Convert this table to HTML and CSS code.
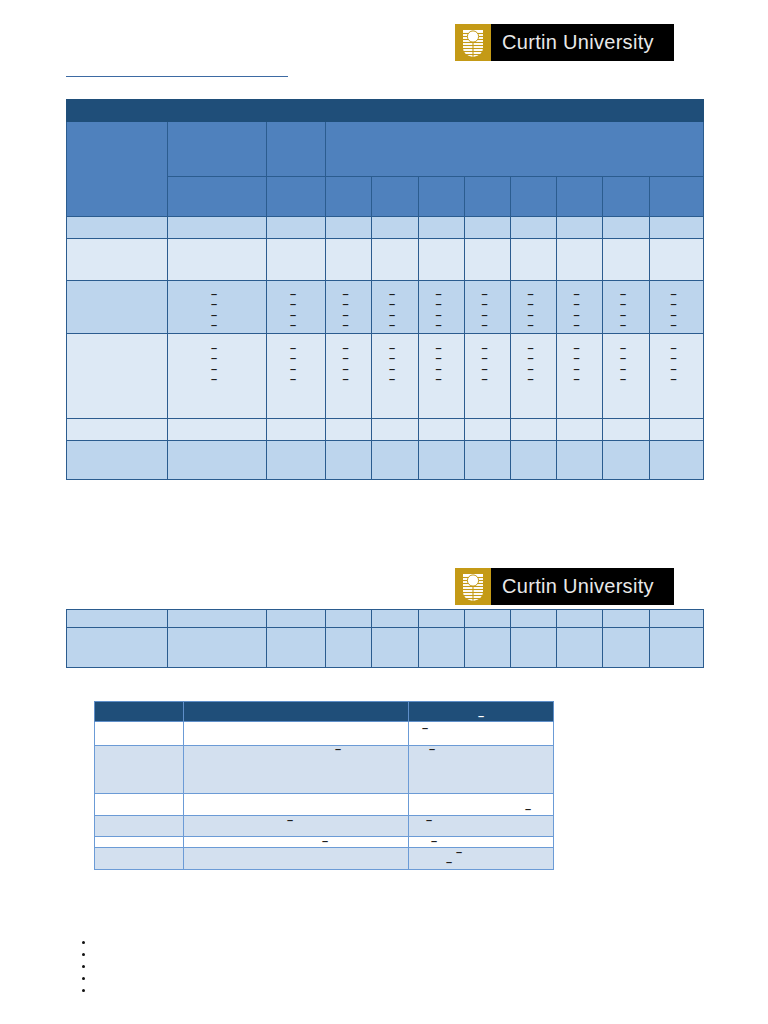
FILE: index.html
```html
<!DOCTYPE html>
<html lang="en">
<head>
<meta charset="utf-8">
<title>Curtin University</title>
<link rel="stylesheet" href="styles.css">
</head>
<body>
<div class="page">
  <div class="logo-row">
    <div class="logo">
      <div class="crest">
        <svg viewBox="0 0 36 37" width="36" height="37">
          <path d="M8 6 H28 V24 Q28 31 18 33 Q8 31 8 24 Z" fill="#fff"/>
          <g stroke="#c49a16" stroke-width="1.1">
            <line x1="8" y1="9.5" x2="28" y2="9.5"/>
            <line x1="8" y1="12.5" x2="28" y2="12.5"/>
            <line x1="8" y1="15.5" x2="28" y2="15.5"/>
            <line x1="8" y1="18.5" x2="28" y2="18.5"/>
            <line x1="8" y1="21.5" x2="28" y2="21.5"/>
            <line x1="8" y1="24.5" x2="28" y2="24.5"/>
            <line x1="8" y1="27.5" x2="28" y2="27.5"/>
            <line x1="8" y1="30.5" x2="28" y2="30.5"/>
            <line x1="18" y1="17" x2="18" y2="33"/>
          </g>
          <circle cx="18" cy="12.5" r="5.6" fill="#fff" stroke="#c49a16" stroke-width="1"/>
        </svg>
      </div>
      <div class="wordmark">Curtin University</div>
    </div>
  </div>
  <div class="rule"></div>

  <table class="t1">
    <colgroup>
      <col class="c101"><col class="c99"><col class="c59"><col class="c46"><col class="c47"><col class="c46"><col class="c46"><col class="c46"><col class="c46"><col class="c47"><col class="c54">
    </colgroup>
    <tr class="h22"><td class="dark" colspan="11"></td></tr>
    <tr class="h55"><td class="hdr" rowspan="2"></td><td class="hdr"></td><td class="hdr"></td><td class="hdr" colspan="8"></td></tr>
    <tr class="h40"><td class="hdr"></td><td class="hdr"></td><td class="hdr"></td><td class="hdr"></td><td class="hdr"></td><td class="hdr"></td><td class="hdr"></td><td class="hdr"></td><td class="hdr"></td><td class="hdr"></td></tr>
    <tr class="h22 mid"><td></td><td></td><td></td><td></td><td></td><td></td><td></td><td></td><td></td><td></td><td></td></tr>
    <tr class="h42 light"><td></td><td></td><td></td><td></td><td></td><td></td><td></td><td></td><td></td><td></td><td></td></tr>
    <tr class="h53 mid">
      <td></td>
      <td class="dashes">–<br>–<br>–<br>–</td>
      <td class="dashes">–<br>–<br>–<br>–</td>
      <td class="dashes">–<br>–<br>–<br>–</td>
      <td class="dashes">–<br>–<br>–<br>–</td>
      <td class="dashes">–<br>–<br>–<br>–</td>
      <td class="dashes">–<br>–<br>–<br>–</td>
      <td class="dashes">–<br>–<br>–<br>–</td>
      <td class="dashes">–<br>–<br>–<br>–</td>
      <td class="dashes">–<br>–<br>–<br>–</td>
      <td class="dashes">–<br>–<br>–<br>–</td>
    </tr>
    <tr class="h85 light">
      <td></td>
      <td class="dashes b">–<br>–<br>–<br>–</td>
      <td class="dashes b">–<br>–<br>–<br>–</td>
      <td class="dashes b">–<br>–<br>–<br>–</td>
      <td class="dashes b">–<br>–<br>–<br>–</td>
      <td class="dashes b">–<br>–<br>–<br>–</td>
      <td class="dashes b">–<br>–<br>–<br>–</td>
      <td class="dashes b">–<br>–<br>–<br>–</td>
      <td class="dashes b">–<br>–<br>–<br>–</td>
      <td class="dashes b">–<br>–<br>–<br>–</td>
      <td class="dashes b">–<br>–<br>–<br>–</td>
    </tr>
    <tr class="h22 light"><td></td><td></td><td></td><td></td><td></td><td></td><td></td><td></td><td></td><td></td><td></td></tr>
    <tr class="h39 mid"><td></td><td></td><td></td><td></td><td></td><td></td><td></td><td></td><td></td><td></td><td></td></tr>
  </table>

  <div class="logo-row second">
    <div class="logo">
      <div class="crest">
        <svg viewBox="0 0 36 37" width="36" height="37">
          <path d="M8 6 H28 V24 Q28 31 18 33 Q8 31 8 24 Z" fill="#fff"/>
          <g stroke="#c49a16" stroke-width="1.1">
            <line x1="8" y1="9.5" x2="28" y2="9.5"/>
            <line x1="8" y1="12.5" x2="28" y2="12.5"/>
            <line x1="8" y1="15.5" x2="28" y2="15.5"/>
            <line x1="8" y1="18.5" x2="28" y2="18.5"/>
            <line x1="8" y1="21.5" x2="28" y2="21.5"/>
            <line x1="8" y1="24.5" x2="28" y2="24.5"/>
            <line x1="8" y1="27.5" x2="28" y2="27.5"/>
            <line x1="8" y1="30.5" x2="28" y2="30.5"/>
            <line x1="18" y1="17" x2="18" y2="33"/>
          </g>
          <circle cx="18" cy="12.5" r="5.6" fill="#fff" stroke="#c49a16" stroke-width="1"/>
        </svg>
      </div>
      <div class="wordmark">Curtin University</div>
    </div>
  </div>

  <table class="t1 t2">
    <colgroup>
      <col class="c101"><col class="c99"><col class="c59"><col class="c46"><col class="c47"><col class="c46"><col class="c46"><col class="c46"><col class="c46"><col class="c47"><col class="c54">
    </colgroup>
    <tr class="h18 mid"><td></td><td></td><td></td><td></td><td></td><td></td><td></td><td></td><td></td><td></td><td></td></tr>
    <tr class="h40 mid"><td></td><td></td><td></td><td></td><td></td><td></td><td></td><td></td><td></td><td></td><td></td></tr>
  </table>

  <table class="t3">
    <colgroup><col class="k1"><col class="k2"><col class="k3"></colgroup>
    <tr class="r20 dark3"><td></td><td></td><td><span class="dash white d-h3">–</span></td></tr>
    <tr class="r24"><td></td><td></td><td><span class="dash d-r1c3">–</span></td></tr>
    <tr class="r48 shade"><td></td><td><span class="dash d-r2c2">–</span></td><td><span class="dash d-r2c3">–</span></td></tr>
    <tr class="r22"><td></td><td></td><td><span class="dash d-r3c3">–</span></td></tr>
    <tr class="r21 shade"><td></td><td><span class="dash d-r4c2">–</span></td><td><span class="dash d-r4c3">–</span></td></tr>
    <tr class="r11"><td></td><td><span class="dash d-r5c2">–</span></td><td><span class="dash d-r5c3">–</span></td></tr>
    <tr class="r22 shade"><td></td><td></td><td><span class="dash d-r6a">–</span><span class="dash d-r6b">–</span></td></tr>
  </table>

  <ul class="bullets">
    <li>&nbsp;</li>
    <li>&nbsp;</li>
    <li>&nbsp;</li>
    <li>&nbsp;</li>
    <li>&nbsp;</li>
  </ul>
</div>
</body>
</html>
```

FILE: styles.css
```css
html, body {
  margin: 0;
  padding: 0;
  background: #ffffff;
}

body {
  font-family: "Liberation Sans", Arial, sans-serif;
  color: #1a1a1a;
}

.page {
  width: 768px;
  padding-top: 24px;
}

.logo-row {
  display: flex;
  justify-content: flex-end;
  padding-right: 94px;
}

.logo-row.second {
  margin-top: 88px;
}

.logo {
  display: flex;
  height: 37px;
}

.crest {
  width: 36px;
  height: 37px;
  background: #c49a16;
}

.crest svg {
  display: block;
}

.wordmark {
  width: 172px;
  padding-left: 11px;
  background: #000000;
  color: #e9e9e9;
  font-family: "Liberation Sans", Arial, sans-serif;
  font-size: 20px;
  letter-spacing: 0.3px;
  line-height: 37px;
  white-space: nowrap;
}

.rule {
  width: 222px;
  margin: 15px 0 0 66px;
  border-top: 1px solid #3d6aa3;
}

table {
  border-collapse: collapse;
  table-layout: fixed;
}

.t1 {
  width: 637px;
  margin: 22px 0 0 66px;
}

.t1 td {
  border: 1px solid #2b5c8f;
  padding: 0;
  vertical-align: top;
}

.t2 {
  margin-top: 4px;
}

.c101 { width: 101px; }
.c99 { width: 99px; }
.c59 { width: 59px; }
.c46 { width: 46px; }
.c47 { width: 47px; }
.c54 { width: 54px; }

.h18 { height: 18px; }
.h22 { height: 22px; }
.h39 { height: 39px; }
.h40 { height: 40px; }
.h42 { height: 42px; }
.h53 { height: 53px; }
.h55 { height: 55px; }
.h85 { height: 85px; }

.t1 td.dark {
  background: #1f4e79;
  border-color: #1f4e79;
}

.t1 td.hdr {
  background: #4f81bd;
}

.mid td {
  background: #bdd5ed;
}

.light td {
  background: #dde9f5;
}

.t1 td.dashes {
  text-align: center;
  padding: 8px 6px 0 0;
  font-size: 11px;
  font-weight: bold;
  line-height: 10.3px;
  color: #1e1e1e;
}

.t1 td.dashes.b {
  padding-top: 9px;
}

.t3 {
  width: 459px;
  margin: 33px 0 0 94px;
}

.k1 { width: 89px; }
.k2 { width: 225px; }
.k3 { width: 145px; }

.t3 td {
  border: 1px solid #6b9bd6;
  padding: 0;
  vertical-align: top;
  background: #ffffff;
}

.t3 .shade td {
  background: #d3e0ef;
}

.t3 .dark3 td {
  background: #1f4e79;
  border-color: #5f8fc9;
}

.r11 { height: 11px; }
.r20 { height: 20px; }
.r21 { height: 21px; }
.r22 { height: 22px; }
.r24 { height: 24px; }
.r48 { height: 48px; }

.dash {
  display: block;
  width: 7px;
  font-size: 11px;
  font-weight: bold;
  line-height: 6px;
  color: #1e1e1e;
}

.dash.white {
  color: #ffffff;
}

.d-h3 { margin: 11px 0 0 69px; }
.d-r1c3 { margin: 3px 0 0 13px; }
.d-r2c2 { margin: 0 0 0 151px; }
.d-r2c3 { margin: 0 0 0 20px; }
.d-r3c3 { margin: 12px 0 0 116px; }
.d-r4c2 { margin: 1px 0 0 103px; }
.d-r4c3 { margin: 1px 0 0 17px; }
.d-r5c2 { margin: 1px 0 0 138px; }
.d-r5c3 { margin: 1px 0 0 22px; }
.d-r6a { margin: 1px 0 0 47px; }
.d-r6b { margin: 4px 0 0 37px; }

.bullets {
  list-style: none;
  margin: 67px 0 0 0;
  padding: 0 0 0 82px;
}

.bullets li {
  position: relative;
  height: 12px;
  font-size: 10px;
  line-height: 12px;
}

.bullets li::before {
  content: "";
  position: absolute;
  left: 0;
  top: 4px;
  width: 3px;
  height: 3px;
  border-radius: 50%;
  background: #111111;
}
```
